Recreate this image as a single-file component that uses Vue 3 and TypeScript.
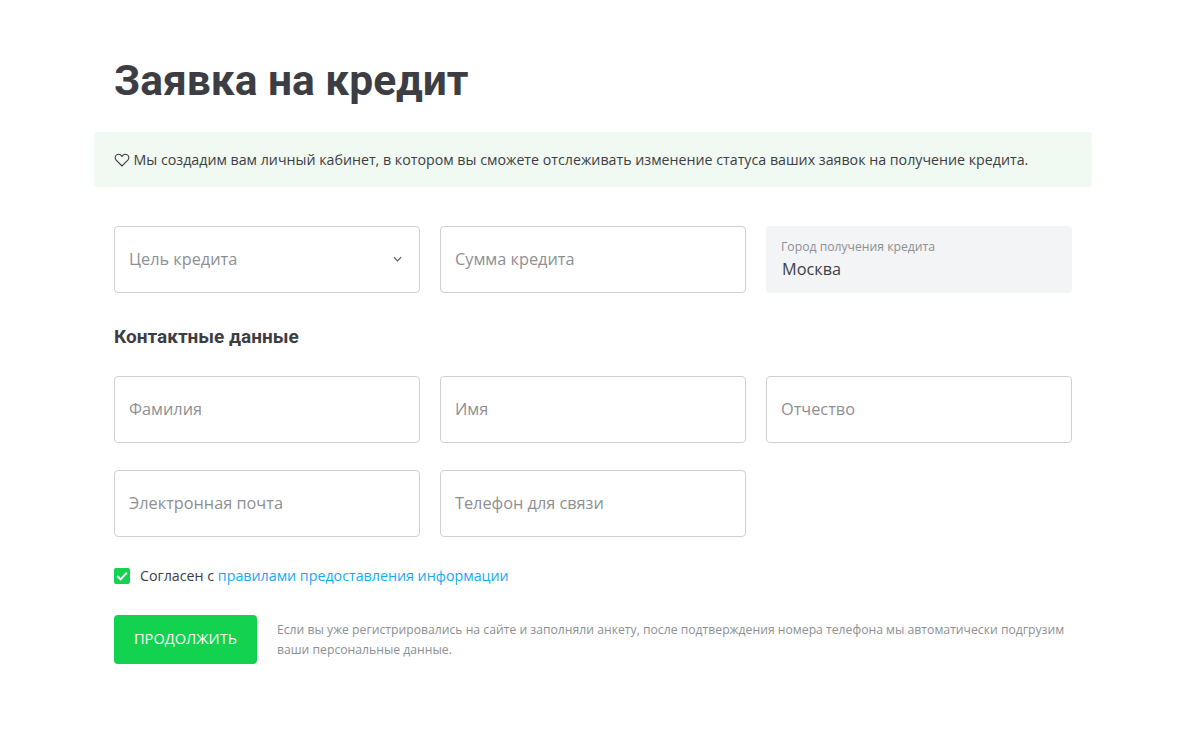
<script setup lang="ts">
const contacts: string[] = ['Фамилия', 'Имя', 'Отчество', 'Электронная почта', 'Телефон для связи']
</script>

<template>
  <main class="page">
    <h1 class="title">Заявка на кредит</h1>
    <div class="notice">
      <svg class="heart" viewBox="0 0 16 16" width="16" height="16" fill="none" stroke="#3d3e44" stroke-width="1.1">
        <path d="M8 14 L2.2 8.1 C0.7 6.5 0.9 4 2.6 2.9 C4.3 1.9 6.6 2.3 8 4.4 C9.4 2.3 11.7 1.9 13.4 2.9 C15.1 4 15.3 6.5 13.8 8.1 Z" />
      </svg>
      <span>Мы создадим вам личный кабинет, в котором вы сможете отслеживать изменение статуса ваших заявок на получение кредита.</span>
    </div>
    <section class="grid first">
      <div class="field select">
        <span>Цель кредита</span>
        <svg viewBox="0 0 10 6" width="9" height="6" fill="none" stroke="#55565c" stroke-width="1.3">
          <path d="M1 1 L5 5 L9 1" />
        </svg>
      </div>
      <div class="field">Сумма кредита</div>
      <div class="field filled">
        <span class="small">Город получения кредита</span>
        <span class="value">Москва</span>
      </div>
    </section>
    <h2 class="subtitle">Контактные данные</h2>
    <section class="grid">
      <div v-for="c in contacts" :key="c" class="field">{{ c }}</div>
    </section>
    <label class="agree">
      <span class="check">
        <svg viewBox="0 0 16 16" width="16" height="16" fill="none" stroke="#fff" stroke-width="2">
          <path d="M3.2 8 L6.6 11.4 L12.8 4.8" />
        </svg>
      </span>
      <span>Согласен с <a class="link">правилами предоставления информации</a></span>
    </label>
    <div class="actions">
      <button class="submit" type="button">ПРОДОЛЖИТЬ</button>
      <p class="hint">Если вы уже регистрировались на сайте и заполняли анкету, после подтверждения номера телефона мы автоматически подгрузим ваши персональные данные.</p>
    </div>
  </main>
</template>

<style>
body { background: #fff; }
</style>

<style scoped>
.page {
  box-sizing: border-box;
  width: 1200px;
  height: 737px;
  padding: 52px 128px 0 114px;
  font-family: "Open Sans", "Noto Sans", sans-serif;
  color: #3d3e44;
  background: #fff;
  overflow: hidden;
}
.title {
  margin: 0;
  font-family: Roboto, "Noto Sans", sans-serif;
  font-size: 42.5px;
  line-height: 58px;
  font-weight: 700;
  color: #3d3e44;
}
.notice {
  display: flex;
  align-items: center;
  gap: 4px;
  box-sizing: border-box;
  width: 998px;
  height: 55px;
  margin: 22px 0 39px -20px;
  padding: 0 20px 0 19.5px;
  background: #f0f9f2;
  border-radius: 4px;
  font-size: 14.22px;
  white-space: nowrap;
}
.heart { flex: none; }
.grid {
  display: grid;
  grid-template-columns: repeat(3, 306px);
  gap: 27px 20px;
}
.field {
  box-sizing: border-box;
  height: 67px;
  display: flex;
  align-items: center;
  padding: 0 14px 2px;
  border: 1px solid #cfd0d3;
  border-radius: 4px;
  font-size: 16.3px;
  color: #8e8f93;
}
.select { justify-content: space-between; padding-right: 17px; }
.filled {
  flex-direction: column;
  align-items: flex-start;
  justify-content: flex-start;
  padding: 13px 15px 0;
  border: none;
  background: #f3f4f6;
}
.small { font-size: 12.2px; line-height: 16px; color: #8e8f93; }
.value { font-size: 16.3px; line-height: 26px; color: #3d3e44; margin: 1px 0 0 1px; }
.subtitle {
  margin: 31px 0 27px;
  font-family: Roboto, "Noto Sans", sans-serif;
  font-size: 19px;
  line-height: 25px;
  font-weight: 700;
  color: #3d3e44;
}
.agree {
  display: flex;
  align-items: center;
  gap: 10px;
  margin-top: 29px;
  font-size: 14.25px;
  line-height: 20px;
}
.check {
  width: 16px;
  height: 16px;
  flex: none;
  display: flex;
  background: #12d24f;
  border-radius: 2px;
}
.link { color: #14aaf5; }
.actions {
  display: flex;
  align-items: center;
  gap: 20px;
  margin-top: 29px;
}
.submit {
  flex: none;
  width: 143px;
  height: 49px;
  border: none;
  border-radius: 4px;
  background: #12d24f;
  color: #fff;
  font-family: inherit;
  font-size: 14.6px;
  padding: 0 0 3px;
}
.hint {
  margin: 0;
  width: 795px;
  font-size: 12.2px;
  line-height: 20px;
  color: #8e8f93;
}
</style>
